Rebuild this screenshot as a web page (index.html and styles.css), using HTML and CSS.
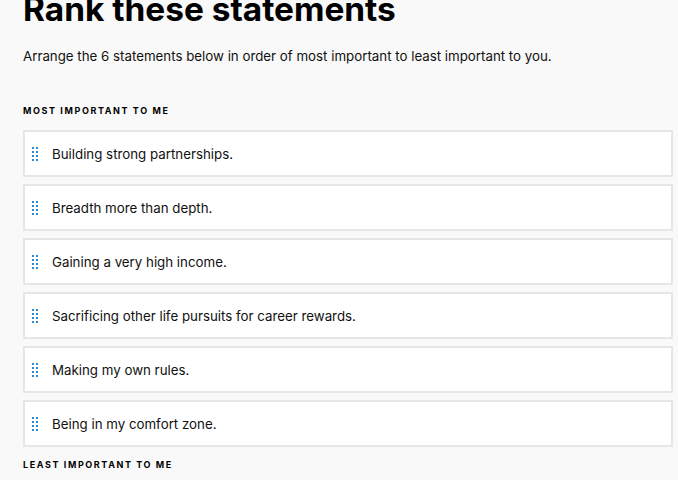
FILE: index.html
```html
<!DOCTYPE html>
<html lang="en">
<head>
    <meta charset="UTF-8">
    <meta name="viewport" content="width=device-width, initial-scale=1.0">
    <title>Rank these statements</title>
    <link rel="stylesheet" href="styles.css">
</head>
<body>
    <div class="container">
        <h1 class="title">Rank these statements</h1>
        <p class="intro">Arrange the 6 statements below in order of most important to least important to you.</p>

        <div class="rank-label">Most important to me</div>

        <ul class="rank-list">
            <li class="rank-item"><span class="handle"></span>Building strong partnerships.</li>
            <li class="rank-item"><span class="handle"></span>Breadth more than depth.</li>
            <li class="rank-item"><span class="handle"></span>Gaining a very high income.</li>
            <li class="rank-item"><span class="handle"></span>Sacrificing other life pursuits for career rewards.</li>
            <li class="rank-item"><span class="handle"></span>Making my own rules.</li>
            <li class="rank-item"><span class="handle"></span>Being in my comfort zone.</li>
        </ul>

        <div class="rank-label rank-label-end">Least important to me</div>
    </div>
</body>
</html>
```

FILE: styles.css
```css
body {
    font-family: 'Inter', 'Liberation Sans', sans-serif;
    background-color: #f9f9f9;
    color: #111;
    margin: 0;
    padding: 0;
}

.container {
    padding: 0 5px 0 23px;
}

.title {
    font-size: 33.4px;
    font-weight: 700;
    line-height: 40px;
    margin: -11px 0 0;
    color: #000;
}

.intro {
    font-size: 13.3px;
    line-height: 20px;
    margin: 17px 0 0;
}

.rank-label {
    font-size: 9px;
    font-weight: 700;
    text-transform: uppercase;
    letter-spacing: 1.6px;
    line-height: 12px;
    margin-top: 39px;
    color: #000;
}

.rank-label-end {
    margin-top: 0;
}

.rank-list {
    list-style: none;
    margin: 13px 0 12px;
    padding: 0;
    display: flex;
    flex-direction: column;
    gap: 7px;
}

.rank-item {
    display: flex;
    align-items: center;
    height: 43px;
    background: #fff;
    border: 2px solid #e6e6e6;
    font-size: 13.3px;
    padding-left: 7px;
}

/* 2 x 4 grid of square dots */
.handle {
    width: 6px;
    height: 14px;
    margin-right: 14px;
    background: repeating-linear-gradient(to bottom, #2a8ad4 0 2px, transparent 2px 4px);
    -webkit-mask: repeating-linear-gradient(to right, #000 0 2px, transparent 2px 4px);
    mask: repeating-linear-gradient(to right, #000 0 2px, transparent 2px 4px);
}
```
